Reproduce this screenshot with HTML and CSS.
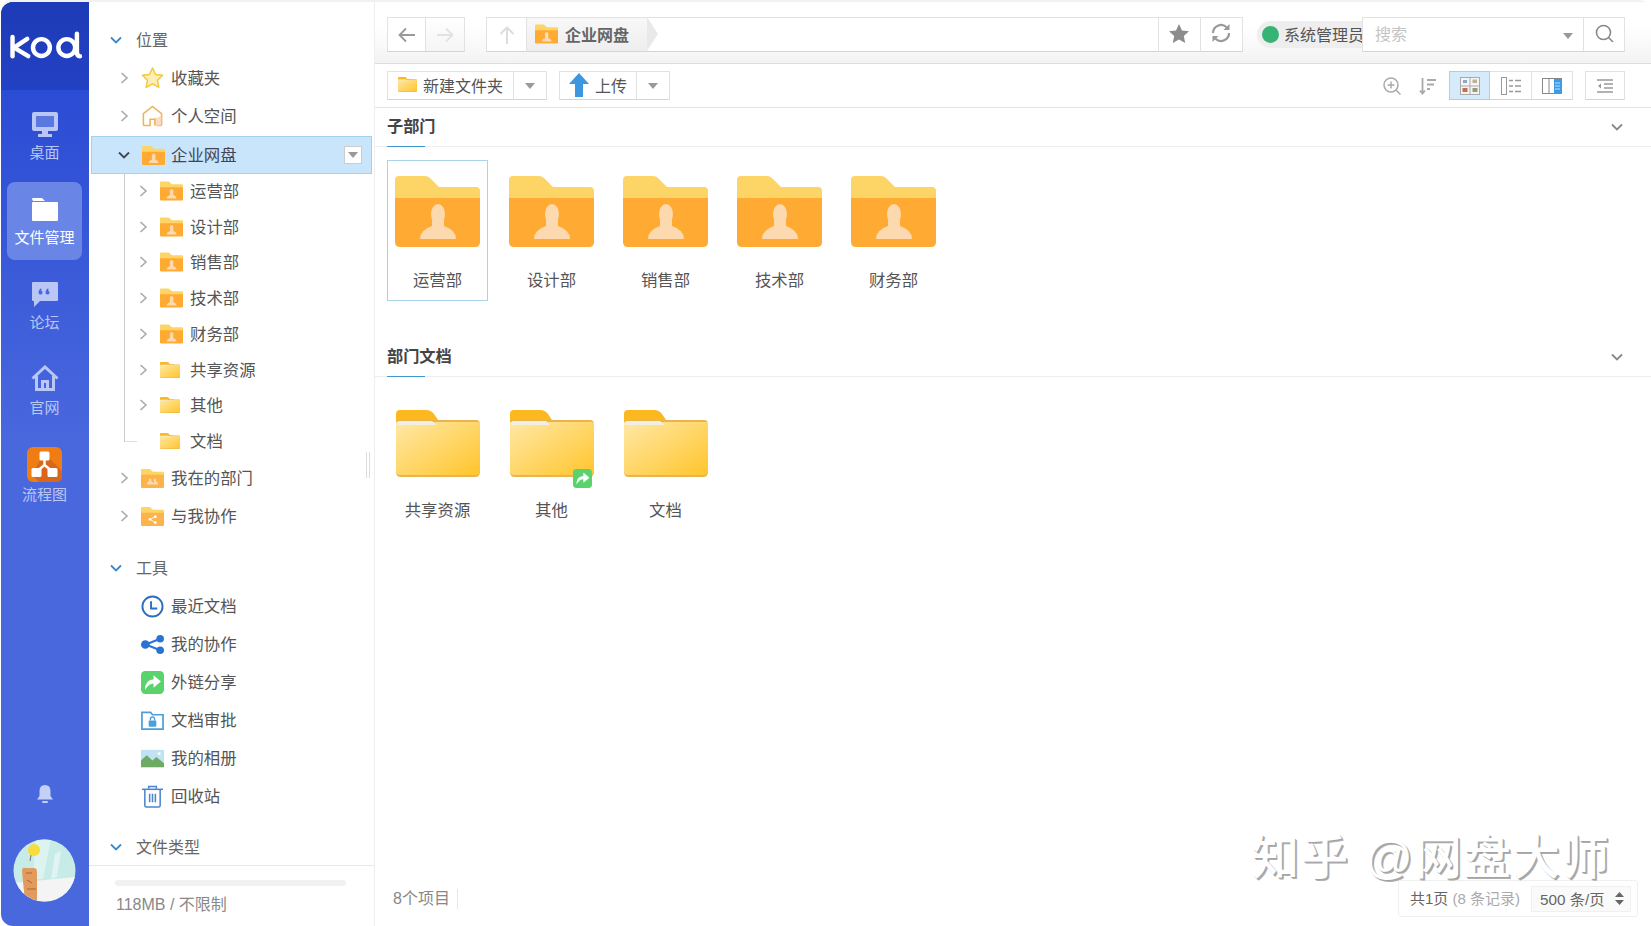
FILE: index.html
```html
<!DOCTYPE html>
<html lang="zh-CN">
<head>
  <meta charset="UTF-8" />
  <title>企业网盘</title>
  <link rel="stylesheet" href="styles.css">
</head>
<body>
  <svg class="defs" width="0" height="0">
    <defs>
      <linearGradient id="yellowFront" x1="0" y1="0" x2="1" y2="1">
        <stop offset="0" stop-color="#ffe8a6"/>
        <stop offset="1" stop-color="#ffc52c"/>
      </linearGradient>
      <symbol id="folderUser" viewBox="0 0 85 71">
        <path d="M4 0H30Q33 0 35 2L44 11H81Q85 11 85 15V30H0V4Q0 0 4 0Z" fill="#fdd466"/>
        <path d="M0 22H85V66Q85 71 80 71H5Q0 71 0 66Z" fill="#ffab33"/>
        <ellipse cx="43" cy="38" rx="7" ry="10" fill="#fcd9ae"/>
        <path d="M25 63Q25 54 37 50V44H49V50Q61 54 61 63Z" fill="#fcd9ae"/>
      </symbol>
      <symbol id="folderYellow" viewBox="0 0 84 67">
        <path d="M4 0H30Q35 0 38 4L42 10H60V30H0V4Q0 0 4 0Z" fill="#fbb81f"/>
        <path d="M0 14Q0 10 4 10H80Q84 10 84 14V62Q84 67 79 67H5Q0 67 0 62Z" fill="#e9b350"/>
        <path d="M0 12H84V62Q84 65 80 65H4Q0 65 0 62Z" fill="url(#yellowFront)"/>
        <path d="M2 11H36L40 15H1Z" fill="#f3eee2"/>
      </symbol>
      <symbol id="greenShare" viewBox="0 0 22 22">
        <rect width="22" height="22" rx="4" fill="#5ad26e"/>
        <path d="M4 18Q3.500 9 12 8V4L19 10L12 16V12Q7.500 12 4 18Z" fill="#fff"/>
      </symbol>
      <symbol id="chevRight" viewBox="0 0 12 14">
        <path d="M3.500 2L9 7L3.500 12" fill="none" stroke="#aaa" stroke-width="1.600"/>
      </symbol>
      <symbol id="chevDown" viewBox="0 0 14 12">
        <path d="M2 3.500L7 8.500L12 3.500" fill="none" stroke="currentColor" stroke-width="1.800"/>
      </symbol>
      <symbol id="caret" viewBox="0 0 12 8">
        <path d="M1 1H11L6 7Z" fill="#999"/>
      </symbol>
    </defs>
  </svg>

  <div class="app">
    <aside class="sidebar">
      <div class="logo">
        <svg width="73" height="30" viewBox="0 0 72 28" fill="none" stroke="#fff" stroke-width="4.400" stroke-linecap="round" stroke-linejoin="round">
          <path d="M2.500 6V25"/>
          <path d="M17 8L4 16.500L18 25"/>
          <circle cx="31" cy="16.500" r="8.300"/>
          <circle cx="56" cy="16.500" r="8.300"/>
          <path d="M66 3V21Q66 25 69 25"/>
        </svg>
      </div>
      <nav class="nav">
        <a class="nav-item">
          <span class="nav-icon">
            <svg width="26" height="25" viewBox="0 0 26 25"><path d="M2 0H24Q26 0 26 2V17Q26 19 24 19H2Q0 19 0 17V2Q0 0 2 0ZM4 4V15H22V4Z" fill="#b9c6f6" fill-rule="evenodd"/><path d="M4 4H22V15H4Z" fill="#5b78e0"/><path d="M10 19H16V22H20V25H6V22H10Z" fill="#b9c6f6"/></svg>
          </span>
          <span class="nav-label">桌面</span>
        </a>
        <a class="nav-item active">
          <span class="nav-icon">
            <svg width="26" height="23" viewBox="0 0 26 23"><path d="M0 1Q0 0 1 0H10L13 3H1Z" fill="#fff"/><path d="M1 4H25Q26 4 26 5V22Q26 23 25 23H1Q0 23 0 22V5Q0 4 1 4Z" fill="#fff"/></svg>
          </span>
          <span class="nav-label">文件管理</span>
        </a>
        <a class="nav-item">
          <span class="nav-icon">
            <svg width="26" height="25" viewBox="0 0 26 25"><path d="M1 0H25Q26 0 26 1V18Q26 19 25 19H8L2 25V19H1Q0 19 0 18V1Q0 0 1 0Z" fill="#b9c6f6"/><path d="M8.500 6.500Q6.500 8 6.500 10.500A2 2 0 1 0 9 8.600Q9 7.800 10 7ZM15.500 6.500Q13.500 8 13.500 10.500A2 2 0 1 0 16 8.600Q16 7.800 17 7Z" fill="#4a69df"/></svg>
          </span>
          <span class="nav-label">论坛</span>
        </a>
        <a class="nav-item">
          <span class="nav-icon home">
            <svg width="28" height="26" viewBox="0 0 28 26" fill="none" stroke="#b9c6f6" stroke-width="3"><path d="M1.500 13.500L14 2L26.500 13.500"/><path d="M5.500 11V24.500H22.500V11"/><path d="M11.500 24.500V16.500H16.500V24.500"/></svg>
          </span>
          <span class="nav-label">官网</span>
        </a>
        <a class="nav-item">
          <span class="nav-icon flow">
            <svg width="35" height="35" viewBox="0 0 35 35"><rect width="35" height="35" rx="6" fill="#ef7d14"/><path d="M17 6L35 24V29Q35 35 29 35H12L5 28Z" fill="#d9661a"/><path d="M17.500 12V18M17.500 18L9 25M17.500 18L26 25" stroke="#fff" stroke-width="2.500" fill="none"/><rect x="12.500" y="4.500" width="10" height="9" rx="1.500" fill="#fff"/><rect x="4.500" y="21" width="10" height="9" rx="1.500" fill="#fff"/><rect x="20.500" y="21" width="10" height="9" rx="1.500" fill="#fff"/></svg>
          </span>
          <span class="nav-label">流程图</span>
        </a>
      </nav>
      <div class="side-bottom">
        <svg class="bell" width="16" height="18" viewBox="0 0 16 18"><path d="M8 0Q13.500 0 13.500 6V11L16 14.500H0L2.500 11V6Q2.500 0 8 0Z" fill="#c5d0f7"/><rect x="5" y="16" width="6" height="2" rx="1" fill="#c5d0f7"/></svg>
        <svg class="avatar" width="63" height="63" viewBox="0 0 63 63">
          <defs><clipPath id="avatarClip"><circle cx="31.500" cy="31.500" r="31"/></clipPath></defs>
          <g clip-path="url(#avatarClip)">
            <rect width="63" height="63" fill="#c7ebe6"/>
            <path d="M22 0H38L30 40H20Z" fill="#dcf3ef"/>
            <path d="M42 15L48 12L44 38L38 40Z" fill="#e0f5f1"/>
            <path d="M0 44L63 38V63H0Z" fill="#f4f4f4"/>
            <path d="M17 22L19 10" stroke="#777" stroke-width="1"/>
            <circle cx="21" cy="11" r="6" fill="#f7dc3c"/>
            <path d="M9 32Q9 28 13 29L21 29Q24 29 24 33L24 63H12Z" fill="#e39a5d"/>
            <path d="M13 34H19M14 41L19 44M14 50H23" stroke="#a8683a" stroke-width="1" fill="none"/>
          </g>
        </svg>
      </div>
    </aside>

    <section class="tree-panel">
      <div class="tree">
        <div class="row sec"><svg class="arrow"><use href="#chevDown"/></svg><span>位置</span></div>
        <div class="row">
          <svg class="arrow-r"><use href="#chevRight"/></svg>
          <svg class="ticon tall" viewBox="0 0 24 24"><path d="M12 1.500L15.200 8.300L22.600 9.200L17.200 14.300L18.600 21.700L12 18.100L5.400 21.700L6.800 14.300L1.400 9.200L8.800 8.300Z" fill="#fdeeb5" stroke="#f2c838" stroke-width="1.500" stroke-linejoin="round"/></svg>
          <span>收藏夹</span>
        </div>
        <div class="row">
          <svg class="arrow-r"><use href="#chevRight"/></svg>
          <svg class="ticon tall" viewBox="0 0 24 24"><path d="M10 22H4Q2.500 22 2.500 20.500V9.500L12 2L21.500 9.500V20.500Q21.500 22 20 22H16" fill="#fff" stroke="#eeb35c" stroke-width="1.600"/><path d="M14 22V14Q19 14 21 11V20.500Q21 22 20 22Z" fill="#fadcc0"/><path d="M9.500 22V15.500H14.500V22" fill="none" stroke="#eeb35c" stroke-width="1.600"/></svg>
          <span>个人空间</span>
        </div>
        <div class="row selected">
          <svg class="arrow-r open"><use href="#chevDown"/></svg>
          <svg class="ticon"><use href="#folderUser"/></svg>
          <span>企业网盘</span>
          <span class="row-menu"><svg width="12" height="8"><use href="#caret"/></svg></span>
        </div>
        <div class="children">
          <div class="row sub"><svg class="arrow-r"><use href="#chevRight"/></svg><svg class="ticon"><use href="#folderUser"/></svg><span>运营部</span></div>
          <div class="row sub"><svg class="arrow-r"><use href="#chevRight"/></svg><svg class="ticon"><use href="#folderUser"/></svg><span>设计部</span></div>
          <div class="row sub"><svg class="arrow-r"><use href="#chevRight"/></svg><svg class="ticon"><use href="#folderUser"/></svg><span>销售部</span></div>
          <div class="row sub"><svg class="arrow-r"><use href="#chevRight"/></svg><svg class="ticon"><use href="#folderUser"/></svg><span>技术部</span></div>
          <div class="row sub"><svg class="arrow-r"><use href="#chevRight"/></svg><svg class="ticon"><use href="#folderUser"/></svg><span>财务部</span></div>
          <div class="row sub"><svg class="arrow-r"><use href="#chevRight"/></svg><svg class="ticon plain"><use href="#folderYellow"/></svg><span>共享资源</span></div>
          <div class="row sub"><svg class="arrow-r"><use href="#chevRight"/></svg><svg class="ticon plain"><use href="#folderYellow"/></svg><span>其他</span></div>
          <div class="row sub"><span class="arrow-r"></span><svg class="ticon plain"><use href="#folderYellow"/></svg><span>文档</span></div>
        </div>
        <div class="row">
          <svg class="arrow-r"><use href="#chevRight"/></svg>
          <svg class="ticon" viewBox="0 0 85 71"><path d="M4 0H30Q33 0 35 2L44 11H81Q85 11 85 15V30H0V4Q0 0 4 0Z" fill="#fdd466"/><path d="M0 22H85V66Q85 71 80 71H5Q0 71 0 66Z" fill="#fdb24a"/><path d="M22 58Q22 48 30 46V36H38V46Q46 48 46 58ZM42 58Q52 48 47 44V36H55V46Q63 48 63 58Z" fill="#fcdcb4"/></svg>
          <span>我在的部门</span>
        </div>
        <div class="row">
          <svg class="arrow-r"><use href="#chevRight"/></svg>
          <svg class="ticon" viewBox="0 0 85 71"><path d="M4 0H30Q33 0 35 2L44 11H81Q85 11 85 15V30H0V4Q0 0 4 0Z" fill="#fdd466"/><path d="M0 22H85V66Q85 71 80 71H5Q0 71 0 66Z" fill="#fdb24a"/><path d="M52 36L34 46L52 58" fill="none" stroke="#fff" stroke-width="3"/><circle cx="53" cy="36" r="5" fill="#fff"/><circle cx="33" cy="46" r="5" fill="#fff"/><circle cx="53" cy="58" r="5" fill="#fff"/></svg>
          <span>与我协作</span>
        </div>

        <div class="row sec gap-top"><svg class="arrow"><use href="#chevDown"/></svg><span>工具</span></div>
        <div class="row tool">
          <svg class="ticon" viewBox="0 0 24 24" fill="none" stroke="#2a6fc4" stroke-width="2"><circle cx="12" cy="12" r="10.500"/><path d="M10.500 6.500V14H17"/></svg>
          <span>最近文档</span>
        </div>
        <div class="row tool">
          <svg class="ticon" viewBox="0 0 24 24"><path d="M5 12L20 6M5 12L20 18" stroke="#2a72d4" stroke-width="2"/><circle cx="4.500" cy="12" r="4.500" fill="#2a72d4"/><circle cx="20" cy="6" r="4" fill="#2a72d4"/><circle cx="20" cy="18" r="4" fill="#2a72d4"/></svg>
          <span>我的协作</span>
        </div>
        <div class="row tool">
          <svg class="ticon"><use href="#greenShare"/></svg>
          <span>外链分享</span>
        </div>
        <div class="row tool">
          <svg class="ticon" viewBox="0 0 24 24"><path d="M1 3.500H10L12 6H23V21H1Z" fill="#fff" stroke="#4aa0dc" stroke-width="1.800"/><rect x="8" y="12" width="8" height="6.500" rx="1" fill="#4aa0dc"/><path d="M9.800 12V10.500A2.200 2.200 0 0 1 14.200 10.500V12" fill="none" stroke="#4aa0dc" stroke-width="1.400"/></svg>
          <span>文档审批</span>
        </div>
        <div class="row tool">
          <svg class="ticon" viewBox="0 0 24 24"><rect y="3" width="24" height="18" fill="#bfe3f2"/><path d="M0 21V14L6 8.500L12 14L16 10.500L24 17V21Z" fill="#6eaa62"/><circle cx="19" cy="7" r="1.500" fill="#fff"/></svg>
          <span>我的相册</span>
        </div>
        <div class="row tool">
          <svg class="ticon" viewBox="0 0 24 24" fill="none" stroke="#4a86cc" stroke-width="1.600"><path d="M1 4.500H23"/><path d="M8 4V1.500H16V4"/><path d="M4 5V21.500Q4 23 5.500 23H18.500Q20 23 20 21.500V5"/><path d="M9 9V18M12 9V18M15 9V18"/></svg>
          <span>回收站</span>
        </div>

        <div class="row sec gap-top-s"><svg class="arrow"><use href="#chevDown"/></svg><span>文件类型</span></div>
      </div>
      <div class="quota">
        <div class="quota-bar"></div>
        <div class="quota-text">118MB / 不限制</div>
      </div>
      <span class="splitter"></span>
    </section>

    <main class="main">
      <header class="nav-bar">
        <div class="btn-group">
          <button class="btn nav-btn"><svg width="18" height="16" viewBox="0 0 18 16" fill="none" stroke="#999" stroke-width="1.800"><path d="M8 1.500L1.500 8L8 14.500M1.500 8H17"/></svg></button>
          <button class="btn nav-btn off"><svg width="18" height="16" viewBox="0 0 18 16" fill="none" stroke="#e2e2e2" stroke-width="1.800"><path d="M10 1.500L16.500 8L10 14.500M16.500 8H1"/></svg></button>
        </div>
        <div class="address">
          <button class="btn up-btn"><svg width="16" height="18" viewBox="0 0 16 18" fill="none" stroke="#ddd" stroke-width="2"><path d="M1.500 8L8 1.500L14.500 8M8 1.500V18"/></svg></button>
          <div class="crumb">
            <svg width="23" height="20"><use href="#folderUser"/></svg>
            <span>企业网盘</span>
          </div>
          <span class="crumb-tip"></span>
          <div class="address-fill"></div>
          <button class="btn addr-btn"><svg width="20" height="19" viewBox="0 0 20 19"><path d="M10 0L13 6.500L20 7.300L14.800 12L16.200 19L10 15.500L3.800 19L5.200 12L0 7.300L7 6.500Z" fill="#8c8c8c"/></svg></button>
          <button class="btn addr-btn"><svg width="20" height="20" viewBox="0 0 20 20" fill="none" stroke="#999" stroke-width="2.200"><path d="M2 10A8 8 0 0 1 15.500 4.200"/><path d="M18 10A8 8 0 0 1 4.500 15.800"/><path d="M18.500 1V7H12.500ZM1.500 19V13H7.500Z" fill="#999" stroke="none"/></svg></button>
        </div>
        <div class="user"><span class="dot"></span><span class="user-name">系统管理员</span></div>
        <div class="search">
          <span class="search-input">搜索</span>
          <svg class="search-caret" width="12" height="8"><use href="#caret"/></svg>
          <button class="btn search-btn"><svg width="19" height="19" viewBox="0 0 19 19" fill="none" stroke="#888" stroke-width="1.600"><circle cx="8.500" cy="8.500" r="7"/><path d="M13.500 13.500L18 18"/></svg></button>
        </div>
      </header>

      <div class="toolbar">
        <div class="split new-btn">
          <button class="btn main-part">
            <svg width="19" height="15"><use href="#folderYellow"/></svg>
            <span>新建文件夹</span>
          </button>
          <button class="btn more-part"><svg width="12" height="8"><use href="#caret"/></svg></button>
        </div>
        <div class="split up">
          <button class="btn main-part">
            <svg width="20" height="24" viewBox="0 0 20 24"><path d="M10 0L20 11H14V24H6V11H0Z" fill="#3d96e0"/></svg>
            <span>上传</span>
          </button>
          <button class="btn more-part"><svg width="12" height="8"><use href="#caret"/></svg></button>
        </div>
        <div class="tool-right">
          <svg class="tool-ico" width="18" height="18" viewBox="0 0 18 18" fill="none" stroke="#aaa" stroke-width="1.500"><circle cx="8" cy="8" r="7"/><path d="M13 13L17.500 17.500M8 4.500V11.500M4.500 8H11.500"/></svg>
          <svg class="tool-ico sort" width="18" height="18" viewBox="0 0 18 18" fill="none" stroke="#aaa" stroke-width="1.800"><path d="M3.500 1V16M1 13.500L3.500 16.500L6 13.500M8 3H17M8 7.500H15M8 12H11"/></svg>
          <div class="views">
            <button class="btn view on"><svg width="20" height="18" viewBox="0 0 20 18"><rect x=".5" y=".5" width="19" height="17" fill="#f4f4f4" stroke="#aaa"/><path d="M10 0V18M0 9H20" stroke="#aaa"/><rect x="3" y="3" width="4" height="3" fill="#8aa9c9"/><rect x="12.500" y="2.500" width="4.500" height="3.500" fill="#bbb09a"/><rect x="2.500" y="11" width="5" height="4" fill="#c96a54"/><rect x="12.500" y="11" width="5" height="4" fill="#9a9a78"/></svg></button>
            <button class="btn view"><svg width="20" height="18" viewBox="0 0 20 18" fill="none" stroke="#999"><rect x=".5" y=".5" width="5" height="17"/><path d="M8 3.500H12M14 3.500H20M8 9H12M14 9H20M8 14.500H12M14 14.500H20" stroke-width="1.400"/></svg></button>
            <button class="btn view"><svg width="20" height="16" viewBox="0 0 20 16"><rect x=".5" y=".5" width="19" height="15" fill="#fff" stroke="#888"/><path d="M7 0V16" stroke="#888"/><rect x="12" y="1" width="7" height="14" fill="#3d9be6"/><path d="M13 5H18M13 8H18M13 11H18" stroke="#bfe0fa"/></svg></button>
          </div>
          <button class="btn view last"><svg width="16" height="14" viewBox="0 0 16 14" fill="none" stroke="#999" stroke-width="1.500"><path d="M0 1H16M7 5H16M7 9H16M0 13H16"/><path d="M4 4.500L1 7L4 9.500Z" fill="#999" stroke="none"/></svg></button>
        </div>
      </div>

      <div class="content">
        <div class="group-head">
          <h3>子部门</h3>
          <svg class="group-chev" width="14" height="12"><use href="#chevDown"/></svg>
        </div>
        <div class="grid first">
          <div class="item picked"><svg class="big" width="85" height="71"><use href="#folderUser"/></svg><span>运营部</span></div>
          <div class="item"><svg class="big" width="85" height="71"><use href="#folderUser"/></svg><span>设计部</span></div>
          <div class="item"><svg class="big" width="85" height="71"><use href="#folderUser"/></svg><span>销售部</span></div>
          <div class="item"><svg class="big" width="85" height="71"><use href="#folderUser"/></svg><span>技术部</span></div>
          <div class="item"><svg class="big" width="85" height="71"><use href="#folderUser"/></svg><span>财务部</span></div>
        </div>
        <div class="group-head">
          <h3>部门文档</h3>
          <svg class="group-chev" width="14" height="12"><use href="#chevDown"/></svg>
        </div>
        <div class="grid">
          <div class="item"><svg class="big yellow" width="84" height="67"><use href="#folderYellow"/></svg><span>共享资源</span></div>
          <div class="item">
            <svg class="big yellow" width="84" height="67"><use href="#folderYellow"/></svg>
            <svg class="badge" width="19" height="19"><use href="#greenShare"/></svg>
            <span>其他</span>
          </div>
          <div class="item"><svg class="big yellow" width="84" height="67"><use href="#folderYellow"/></svg><span>文档</span></div>
        </div>
      </div>

      <footer class="status">
        <div class="count">8个项目</div>
        <div class="pager">
          <span class="pager-text">共1页 <em>(8 条记录)</em></span>
          <span class="per-page"><span class="pager-text">500 条/页</span>
            <svg width="9" height="13" viewBox="0 0 9 13"><path d="M4.500 0L9 5H0ZM0 8H9L4.500 13Z" fill="#666"/></svg>
          </span>
        </div>
      </footer>
      <div class="watermark">知乎 @网盘大师</div>
    </main>
  </div>
</body>
</html>
```

FILE: styles.css
```css
* { box-sizing: border-box; }
html, body { height: 100%; }
body {
  margin: 0;
  background: #fff;
  font-family: "Liberation Sans", "Noto Sans CJK SC", sans-serif;
  font-size: 16px;
  color: #555;
  overflow: hidden;
}
.defs { position: absolute; }
.app {
  display: flex;
  height: 926px;
  padding-left: 1px;
  border-top: 2px solid #f1f1f1;
  border-radius: 12px 12px 0 0;
}

/* left blue bar */
.sidebar {
  width: 88px;
  flex: none;
  display: flex;
  flex-direction: column;
  border-radius: 12px 0 0 12px;
  overflow: hidden;
  background: linear-gradient(#2b4cd4 90px, #4968de 440px);
}
.logo {
  height: 88px;
  display: flex;
  align-items: center;
  justify-content: center;
  padding: 0 0 2px 2px;
  background: linear-gradient(#1d3bb6, #2341c4);
}
.nav {
  display: flex;
  flex-direction: column;
  gap: 7px;
  padding: 7px 7px 0 6px;
}
.nav-item {
  height: 78px;
  display: flex;
  flex-direction: column;
  align-items: center;
  padding-top: 12px;
  border-radius: 8px;
  color: #b9c6f6;
  font-size: 15px;
}
.nav-item.active {
  background: #6985e6;
  color: #fff;
}
.nav-item:last-child { margin-top: 2px; }
.nav-icon {
  height: 30px;
  display: flex;
  align-items: center;
  justify-content: center;
}
.nav-icon.home { margin-top: -1px; margin-bottom: 1px; }
.nav-icon.flow { margin-top: -3px; margin-bottom: 1px; height: 32px; }
.nav-label { line-height: 20px; margin-top: 4px; }
.side-bottom {
  margin-top: auto;
  padding-bottom: 24px;
  display: flex;
  flex-direction: column;
  align-items: center;
}
.bell { margin-bottom: 36px; }
.avatar { margin-right: 1px; }

/* folder tree */
.tree-panel {
  position: relative;
  width: 286px;
  flex: none;
  display: flex;
  flex-direction: column;
  border-right: 1px solid #eee;
}
.tree {
  height: 864px;
  overflow: hidden;
  padding-top: 19px;
  border-bottom: 1px solid #e8e8e8;
  font-size: 16.400px;
}
.row {
  height: 38px;
  display: flex;
  align-items: center;
  padding-left: 29px;
  white-space: nowrap;
}
.row > span:not(.arrow-r):not(.row-menu) { padding-bottom: 2px; }
.row.sec { padding-left: 20px; color: #666; font-size: 16px; }
.row.sec > span { margin-left: 13px; padding-bottom: 0; }
.gap-top { margin-top: 14px; }
.gap-top-s { margin-top: 13px; }
.arrow { width: 14px; height: 12px; color: #3d88c8; }
.arrow-r { width: 12px; height: 14px; flex: none; }
.ticon { width: 23px; height: 21px; margin: 0 7px 0 11px; flex: none; }
.ticon.tall { height: 24px; }
.row.tool { padding-left: 52px; }
.row.tool .ticon { width: 23px; height: 23px; margin-left: 0; }
.row.selected {
  margin: 1px 2px -1px 2px;
  padding-left: 25px;
  background: #c9e5fb;
  border: 1px solid #a5d0ee;
  color: #445;
}
.row.selected > span:not(.row-menu) { padding-bottom: 3px; }
.row.selected .arrow-r { width: 14px; height: 12px; color: #445; margin-right: 2px; }
.row.selected .ticon { margin: 0 6px 0 9px; }
.row-menu {
  margin-left: auto;
  margin-right: 9px;
  width: 18px;
  height: 18px;
  background: #fff;
  border: 1px solid #ccc;
  display: flex;
  align-items: center;
  justify-content: center;
}
.children {
  position: relative;
}
.children::before {
  content: "";
  position: absolute;
  left: 35px;
  top: 0;
  width: 12px;
  height: 268px;
  border-left: 1px solid #ccc;
  border-bottom: 1px solid #ddd;
}
.row.sub { height: 35.750px; padding-left: 48px; }
.row.sub .ticon { width: 23px; height: 20px; margin-right: 7px; margin-left: 11px; }
.row.sub .ticon.plain { width: 20px; height: 16px; margin-right: 10px; }
.quota { padding: 14px 28px 0 26px; }
.quota-bar { height: 6px; border-radius: 3px; background: #f1f1f1; }
.quota-text { margin-top: 9px; padding-left: 1px; color: #888; font-size: 16px; line-height: 20px; }
.splitter {
  position: absolute;
  left: 277px;
  top: 450px;
  width: 4px;
  height: 26px;
  border-left: 1px solid #ddd;
  border-right: 1px solid #ddd;
}

/* main */
.main {
  position: relative;
  flex: 1;
  display: flex;
  flex-direction: column;
  min-width: 0;
}
.btn {
  display: flex;
  align-items: center;
  justify-content: center;
  gap: 6px;
  padding: 0;
  background: #fff;
  border: 1px solid #e2e2e2;
  border-bottom-color: #d4d4d4;
  font: inherit;
  color: #555;
}
.nav-bar {
  height: 62px;
  flex: none;
  display: flex;
  padding: 15px 26px 0 12px;
  background: linear-gradient(#fff 40%, #f3f3f3);
  border-bottom: 1px solid #ddd;
}
.btn-group { display: flex; margin-right: 21px; }
.nav-btn { width: 39px; height: 35px; }
.nav-btn.off { background: linear-gradient(#fff, #f5f5f5); border-left: 0; }
.address {
  position: relative;
  flex: none;
  width: 757px;
  height: 35px;
  display: flex;
  background: #fff;
}
.up-btn { width: 41px; height: 35px; }
.crumb {
  width: 120px;
  height: 35px;
  display: flex;
  align-items: center;
  gap: 7px;
  padding: 0 0 2px 8px;
  background: linear-gradient(#f8f8f8, #eeeeee);
  border-top: 1px solid #e2e2e2;
  border-bottom: 1px solid #d4d4d4;
  color: #666;
  font-weight: 700;
}
.crumb-tip {
  width: 0;
  height: 0;
  border-left: 11px solid #e9e9e9;
  border-top: 17.500px solid transparent;
  border-bottom: 17.500px solid transparent;
}
.address-fill {
  flex: 1;
  margin-left: -11px;
  border-top: 1px solid #e2e2e2;
  border-bottom: 1px solid #d4d4d4;
}
.addr-btn { width: 42.500px; height: 35px; padding-bottom: 3px; border-left: 1px solid #e2e2e2; }
.addr-btn:last-child { border-left: 0; }
.user {
  margin: 4px 0 0 14px;
  height: 27px;
  width: 119px;
  display: flex;
  align-items: center;
  gap: 5px;
  padding-left: 5px;
  background: #eee;
  border-radius: 14px 0 0 14px;
  color: #555;
  white-space: nowrap;
  flex: none;
}
.user-name { padding-bottom: 1px; }
.dot { width: 17px; height: 17px; border-radius: 50%; background: #37b374; flex: none; }
.search {
  position: relative;
  flex: none;
  margin-left: -14px;
  width: 263px;
  height: 35px;
  display: flex;
  align-items: center;
  background: #fff;
  border: 1px solid #e2e2e2;
  border-bottom-color: #d4d4d4;
}
.search-input { flex: 1; padding: 0 0 3px 12px; color: #c4c4c4; }
.search-caret { margin-right: 9px; margin-top: 2px; }
.search-btn { width: 41px; height: 33px; padding-bottom: 2px; border-width: 0 0 0 1px; }

.toolbar {
  height: 44px;
  flex: none;
  display: flex;
  padding: 7px 26px 0 12px;
  border-bottom: 1px solid #e4e4e4;
}
.split { display: flex; height: 29px; }
.split.new-btn { width: 160px; }
.split.up { width: 111px; margin-left: 12px; }
.main-part { flex: 1; padding-bottom: 2px; border-right: 0; }
.more-part { width: 34px; }
.tool-right { margin-left: auto; display: flex; align-items: center; height: 29px; }
.tool-ico { margin-right: 18px; }
.tool-ico.sort { margin-right: 12px; }
.views { display: flex; }
.view { width: 41.300px; height: 29px; }
.view + .view { border-left: 0; }
.view.on { background: #d5ebf9; border-color: #a5d0ee; }
.view.last { width: 40px; margin-left: 12px; }

.group-head {
  position: relative;
  height: 39px;
  padding-left: 12px;
  display: flex;
  align-items: center;
  justify-content: space-between;
  border-bottom: 1px solid #eee;
}
.group-head::after {
  content: "";
  position: absolute;
  left: 12px;
  bottom: -1px;
  width: 38px;
  height: 1px;
  background: #3f97cf;
}
.group-head h3 {
  margin: 0 0 2px;
  font-size: 16.200px;
  font-weight: 700;
  line-height: 34px;
  color: #444;
}
.group-chev { margin-right: 27px; color: #888; }
.grid {
  display: flex;
  gap: 13px;
  padding: 13px 12px 0;
}
.grid.first { height: 191px; }
.item {
  position: relative;
  width: 101px;
  height: 141px;
  display: flex;
  flex-direction: column;
  align-items: center;
  padding-top: 15px;
  border: 1px solid transparent;
  font-size: 16.400px;
}
.item.picked { border-color: #a9d3ea; }
.item span { position: absolute; top: 107.500px; line-height: 22px; }
.big.yellow { margin-top: 4px; }
.badge { position: absolute; left: 71px; top: 78px; }

.status {
  margin-top: auto;
  height: 46px;
  padding: 0 13px 9px 18px;
  display: flex;
  align-items: flex-end;
  justify-content: space-between;
  font-size: 16px;
  color: #888;
}
.count {
  width: 65px;
  line-height: 20px;
  margin-bottom: 8px;
  white-space: nowrap;
  border-right: 1px solid #e6e6e6;
}
.pager {
  width: 240px;
  height: 37px;
  display: flex;
  align-items: center;
  justify-content: space-between;
  padding: 0 6px 0 11px;
  background: #fff;
  border: 1px solid #f0f0f0;
  border-radius: 3px;
  font-size: 15px;
  color: #666;
}
.pager-text { padding-bottom: 2px; }
.pager em { font-style: normal; color: #aaa; }
.per-page {
  width: 100px;
  height: 26px;
  display: flex;
  align-items: center;
  justify-content: space-between;
  padding: 0 6px 0 8px;
  background: #fafafa;
  border: 1px solid #f0f0f0;
  font-size: 15.300px;
}
.watermark {
  position: absolute;
  left: 877px;
  top: 828px;
  white-space: nowrap;
  font-size: 47px;
  font-weight: 500;
  line-height: 56px;
  letter-spacing: 2px;
  color: #fff;
  text-shadow: 1px 1px 0 #a4a4a4, 2px 2px 0 #aeaeae;
  pointer-events: none;
}
```
